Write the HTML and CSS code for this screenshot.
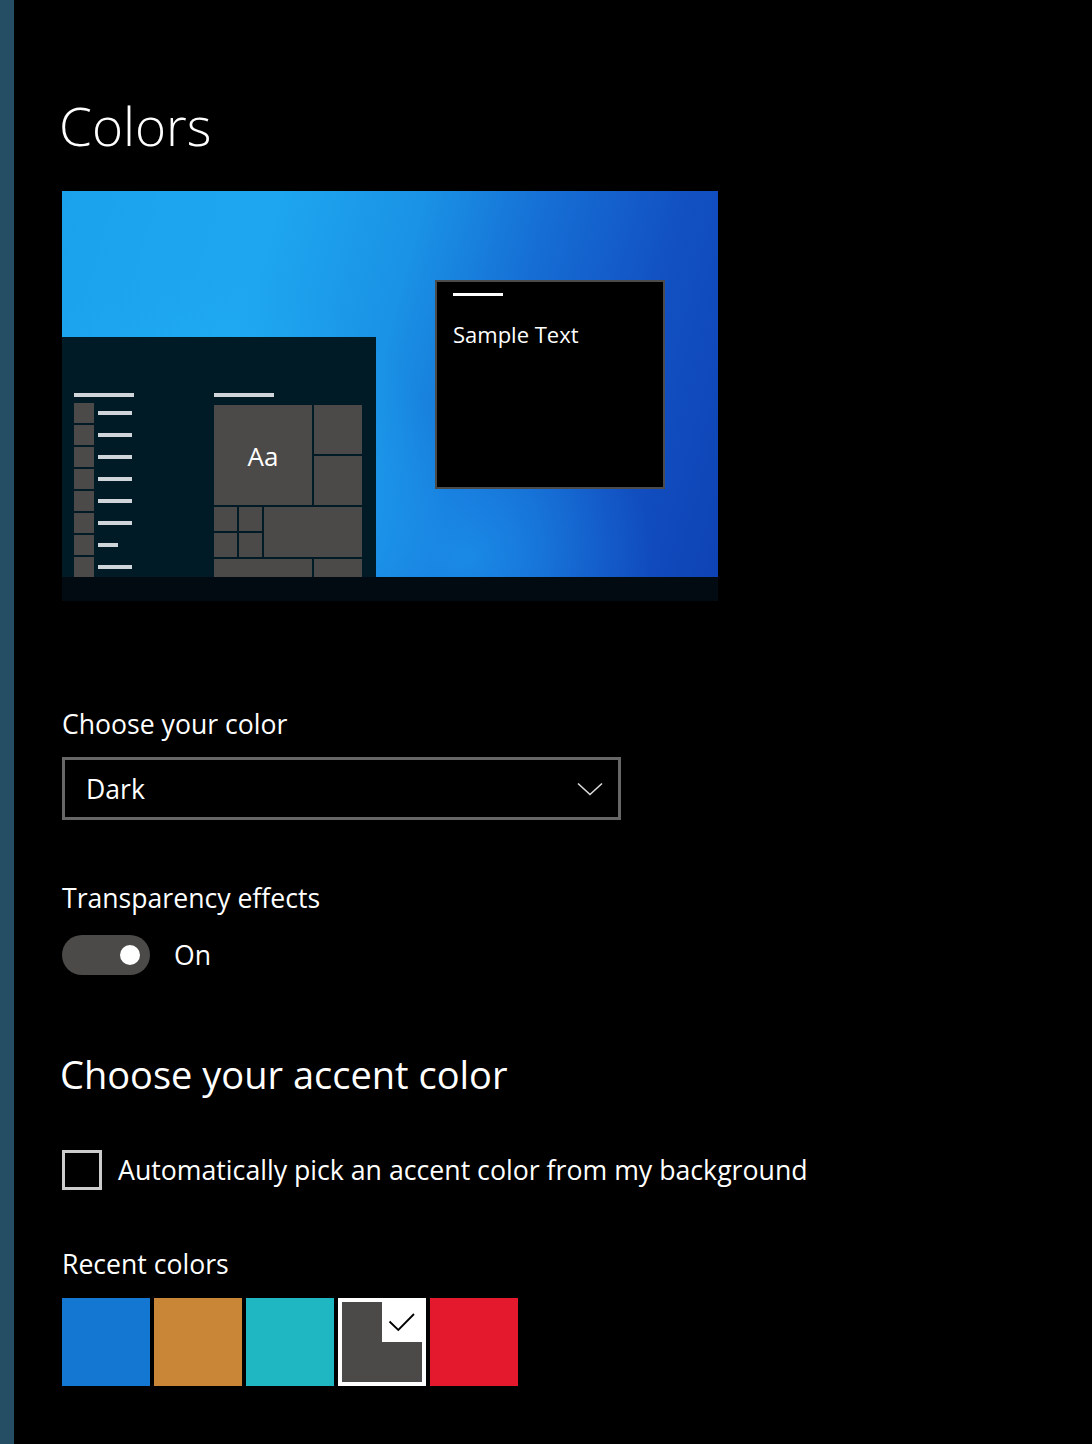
FILE: index.html
```html
<!DOCTYPE html>
<html lang="en">
<head>
<meta charset="utf-8">
<title>Colors</title>
<link rel="stylesheet" href="styles.css">
</head>
<body>
<div class="sidebar"></div>
<main class="main">
  <h1 class="title">Colors</h1>

  <div class="preview">
    <div class="desktop">
      <div class="start">
        <div class="start-list">
          <div class="bar"></div>
          <ul class="apps">
            <li><span class="sq"></span><span class="ln"></span></li>
            <li><span class="sq"></span><span class="ln"></span></li>
            <li><span class="sq"></span><span class="ln"></span></li>
            <li><span class="sq"></span><span class="ln"></span></li>
            <li><span class="sq"></span><span class="ln"></span></li>
            <li><span class="sq"></span><span class="ln"></span></li>
            <li><span class="sq"></span><span class="ln short"></span></li>
            <li><span class="sq"></span><span class="ln"></span></li>
          </ul>
        </div>
        <div class="start-tiles">
          <div class="bar"></div>
          <div class="tiles">
            <div class="tile t-big">Aa</div>
            <div class="tile t-r1"></div>
            <div class="tile t-r2"></div>
            <div class="tile t-s1"></div>
            <div class="tile t-s2"></div>
            <div class="tile t-s3"></div>
            <div class="tile t-s4"></div>
            <div class="tile t-wide"></div>
            <div class="tile t-b1"></div>
            <div class="tile t-b2"></div>
          </div>
        </div>
      </div>
      <div class="window">
        <div class="win-line"></div>
        <div class="win-text">Sample Text</div>
      </div>
    </div>
    <div class="taskbar"></div>
  </div>

  <div class="label label-color">Choose your color</div>
  <div class="dropdown">
    <span class="dd-value">Dark</span>
    <svg class="chev" width="26" height="14" viewBox="0 0 26 14"><path d="M1 1.5 L13 12.5 L25 1.5" fill="none" stroke="#dcdcdc" stroke-width="1.6"/></svg>
  </div>

  <div class="label label-transp">Transparency effects</div>
  <div class="toggle-row">
    <div class="toggle"><span class="knob"></span></div>
    <span class="toggle-text">On</span>
  </div>

  <h2 class="heading">Choose your accent color</h2>

  <div class="check-row">
    <span class="checkbox"></span>
    <span class="check-text">Automatically pick an accent color from my background</span>
  </div>

  <div class="label label-recent">Recent colors</div>
  <div class="swatches">
    <div class="swatch sw-blue"></div>
    <div class="swatch sw-orange"></div>
    <div class="swatch sw-teal"></div>
    <div class="swatch sw-gray selected">
      <span class="sel-corner">
        <svg width="40" height="40" viewBox="0 0 40 40"><path d="M7.5 19.5 L16.3 28 L32 12" fill="none" stroke="#000" stroke-width="1.8"/></svg>
      </span>
    </div>
    <div class="swatch sw-red"></div>
  </div>
</main>
</body>
</html>
```
FILE: styles.css
```css
* { box-sizing: border-box; }

html, body {
  margin: 0;
  padding: 0;
  background: #000;
}

body {
  display: flex;
  min-height: 1444px;
  font-family: "Open Sans", "Noto Sans", sans-serif;
  color: #fff;
}

.sidebar {
  width: 14px;
  flex: 0 0 14px;
  background: #254d63;
}

.main {
  flex: 1;
  padding: 93px 0 0 48px;
}

.title {
  margin: 0 0 32px -3px;
  font-size: 53px;
  font-weight: 300;
  line-height: 66px;
  height: 66px;
}

/* ---------- preview ---------- */
.preview {
  width: 656px;
  height: 410px;
  display: flex;
  flex-direction: column;
}

.desktop {
  position: relative;
  height: 386px;
  overflow: hidden;
  background:
    radial-gradient(ellipse 55% 80% at 20% 78%, rgba(33, 176, 247, 0.85) 0%, rgba(33, 176, 247, 0) 70%),
    radial-gradient(ellipse 40% 60% at 62% 95%, rgba(28, 150, 238, 0.7) 0%, rgba(28, 150, 238, 0) 70%),
    linear-gradient(105deg, #1ba2ed 0%, #1ea7f0 28%, #1a92e5 48%, #166fd5 64%, #1251c2 82%, #0e43b5 100%);
}

.start {
  position: absolute;
  left: 0;
  bottom: 0;
  width: 314px;
  height: 240px;
  overflow: hidden;
  background: #011b26;
  display: flex;
  align-items: flex-start;
  padding: 56px 0 0 12px;
}

.bar {
  width: 60px;
  height: 4px;
  background: #d0d5d9;
}

.start-list {
  width: 60px;
}

.apps {
  list-style: none;
  margin: 6px 0 0;
  padding: 0;
}

.apps li {
  display: flex;
  align-items: center;
  height: 20px;
  margin-bottom: 2px;
}

.sq {
  width: 20px;
  height: 20px;
  background: #4c4a48;
}

.ln {
  width: 34px;
  height: 4px;
  margin-left: 4px;
  background: #d0d5d9;
}

.ln.short { width: 20px; }

.start-tiles {
  margin-left: 80px;
}

.tiles {
  margin-top: 8px;
  display: grid;
  grid-template-columns: 23px 23px 48px 48px;
  grid-template-rows: 49px 49px 24px 24px 24px;
  gap: 2px;
}

.tile { background: #4c4a48; }

.t-big {
  grid-column: 1 / 4;
  grid-row: 1 / 3;
  display: flex;
  align-items: center;
  justify-content: center;
  font-size: 26px;
  line-height: 1;
  padding-top: 2px;
}
.t-r1 { grid-column: 4; grid-row: 1; }
.t-r2 { grid-column: 4; grid-row: 2; }
.t-s1 { grid-column: 1; grid-row: 3; }
.t-s2 { grid-column: 2; grid-row: 3; }
.t-s3 { grid-column: 1; grid-row: 4; }
.t-s4 { grid-column: 2; grid-row: 4; }
.t-wide { grid-column: 3 / 5; grid-row: 3 / 5; }
.t-b1 { grid-column: 1 / 4; grid-row: 5; }
.t-b2 { grid-column: 4; grid-row: 5; }

.window {
  position: absolute;
  left: 373px;
  top: 89px;
  width: 230px;
  height: 209px;
  border: 2px solid #4b4b4b;
  background: #000;
  padding: 11px 16px;
}

.win-line {
  width: 50px;
  height: 3px;
  background: #fff;
}

.win-text {
  margin-top: 24px;
  font-size: 22px;
  line-height: 28px;
}

.taskbar {
  height: 24px;
  background: #010b11;
}

/* ---------- settings ---------- */
.label {
  font-size: 26.6px;
  line-height: 34px;
  height: 34px;
}

.label-color { margin-top: 106px; }
.label-transp { margin-top: 61px; }
.label-recent { margin-top: 57px; }

.dropdown {
  margin-top: 16px;
  width: 559px;
  height: 63px;
  border: 3px solid #676767;
  display: flex;
  align-items: center;
  justify-content: space-between;
  padding: 0 15px 0 21px;
}

.dd-value {
  font-size: 26.6px;
  line-height: 34px;
}

.toggle-row {
  margin-top: 20px;
  display: flex;
  align-items: center;
  height: 40px;
}

.toggle {
  width: 88px;
  height: 40px;
  border-radius: 20px;
  background: #4c4a48;
  display: flex;
  align-items: center;
  justify-content: flex-end;
  padding-right: 10px;
}

.knob {
  width: 20px;
  height: 20px;
  border-radius: 50%;
  background: #fff;
}

.toggle-text {
  margin-left: 24px;
  font-size: 26.6px;
  line-height: 34px;
}

.heading {
  margin: 75px 0 0 -2px;
  font-size: 38px;
  font-weight: 400;
  line-height: 48px;
  height: 48px;
}

.check-row {
  margin-top: 52px;
  display: flex;
  align-items: center;
  height: 40px;
}

.checkbox {
  width: 40px;
  height: 40px;
  border: 3px solid #cccccc;
}

.check-text {
  margin-left: 16px;
  font-size: 26.7px;
  line-height: 34px;
}

.swatches {
  margin-top: 17px;
  display: flex;
  gap: 4px;
}

.swatch {
  width: 88px;
  height: 88px;
}

.sw-blue { background: #1478d2; }
.sw-orange { background: #c98636; }
.sw-teal { background: #1fb7c1; }
.sw-gray { background: #4c4a48; }
.sw-red { background: #e5192d; }

.swatch.selected {
  border: 4px solid #fff;
  display: flex;
  justify-content: flex-end;
  align-items: flex-start;
}

.sel-corner {
  width: 40px;
  height: 40px;
  background: #fff;
  display: block;
}

.sel-corner svg { display: block; }
```
